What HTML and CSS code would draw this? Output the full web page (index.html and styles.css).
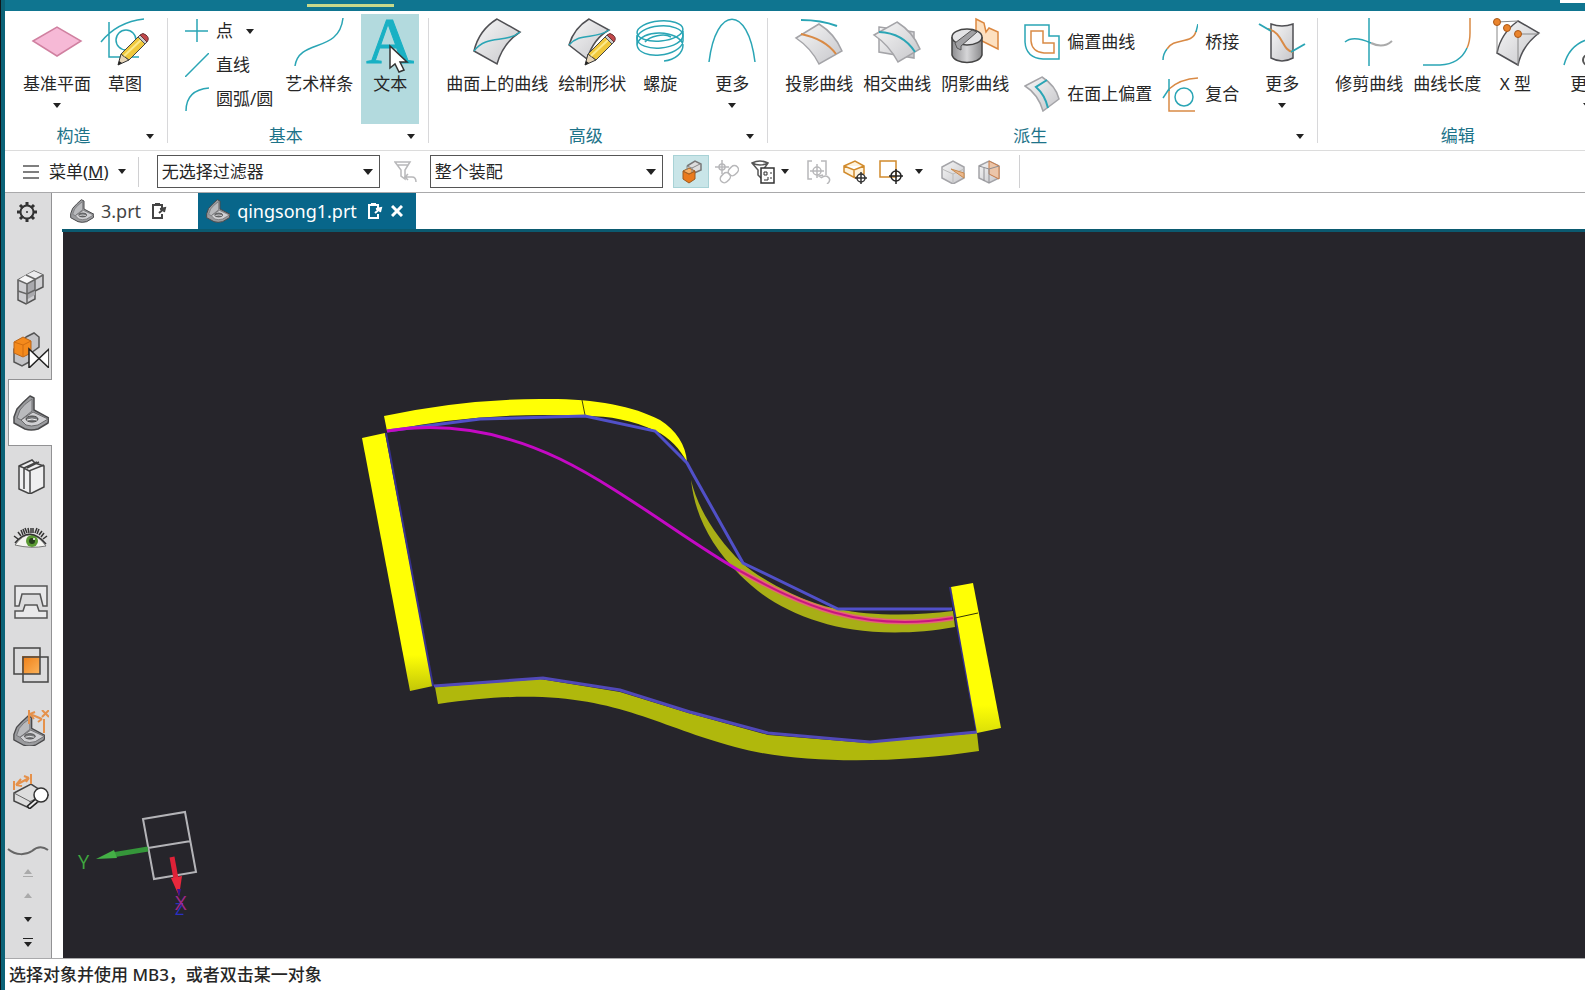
FILE: index.html
```html
<!DOCTYPE html>
<html lang="zh-CN">
<head>
  <meta charset="UTF-8" />
  <meta name="viewport" content="width=device-width, initial-scale=1.0" />
  <title>qingsong1.prt</title>
  <link rel="stylesheet" href="styles.css">
</head>
<body>
  <!-- Shared icons -->
  <svg class="defs" aria-hidden="true">
    <defs>
      <linearGradient id="metal" x1="0" y1="0" x2="1" y2="1">
        <stop offset="0" stop-color="#f7f7f7" />
        <stop offset="1" stop-color="#c6c6ca" />
      </linearGradient>
      <linearGradient id="steel" x1="0" y1="0" x2="1" y2="0">
        <stop offset="0" stop-color="#8d8d90" />
        <stop offset="0.5" stop-color="#d6d6d8" />
        <stop offset="1" stop-color="#8a8a8c" />
      </linearGradient>
      <linearGradient id="amber" x1="0" y1="0" x2="1" y2="1">
        <stop offset="0" stop-color="#ef7d14" />
        <stop offset="1" stop-color="#fbb45c" />
      </linearGradient>
    </defs>
    <symbol id="pencil" viewBox="0 0 48 48">
      <path d="M17 47l3-11 8 6z" fill="#e6d5b8" stroke="#333" />
      <path d="M17 47l1-4 3 2z" fill="#222" />
      <path d="M20 36L37 19l7 7-16 16z" fill="#f0c83c" stroke="#444" />
      <path d="M23 38L40 22" stroke="#fbe98c" stroke-width="2" />
      <path d="M37 19l2-2 7 7-2 2z" fill="#ccc" stroke="#555" />
      <path d="M39 17q3-3 6 0 4 3 1 7z" fill="#c2484b" stroke="#633" />
    </symbol>
    <symbol id="bracket" viewBox="0 0 36 36">
      <path d="M1 22l3-8Q9 8 17 1l4 2v12l15 8-1 5-10 6q-7 2-13 0L1 28z" fill="#9b9c9f" stroke="#4a4a4c" stroke-width="1.5" stroke-linejoin="round" />
      <path d="M4 23l3-8Q11 9 19 4v12L8 25z" fill="#b9babd" stroke="#717174" />
      <path d="M8 25l12-8 15 7-10 6q-7 2-12 0z" fill="#d0d0d3" stroke="#68686a" />
      <ellipse cx="19" cy="24" rx="6" ry="3" fill="#77787b" stroke="#444" />
      <path d="M14 25q5-2 10 0" fill="none" stroke="#eee" />
    </symbol>
    <symbol id="clip" viewBox="0 0 16 18">
      <path d="M11 6V3H2v13h9v-4" fill="none" stroke="currentColor" stroke-width="2" />
      <path d="M4 1h5v3H4z" fill="currentColor" />
      <path d="M8 11l6-5M9 7l5-1-1 4" fill="none" stroke="currentColor" stroke-width="2" />
    </symbol>
  </svg>

  <header class="titlebar">
    <span class="active-mark"></span>
    <span class="search-box"></span>
  </header>

  <nav class="ribbon" aria-label="曲线">
    <section class="group">
      <div class="group-body">
        <button class="big">
          <svg viewBox="0 0 48 48"><path d="M0 23L24 9l24 14-24 15z" fill="#f6b9d6" stroke="#d080a0" stroke-width="1.5" /></svg>
          <span>基准平面</span><i class="caret"></i>
        </button>
        <button class="big">
          <svg viewBox="0 0 48 48"><path d="M8 4v35h30M0 24Q16 4 43 1" class="teal" /><circle cx="25" cy="22" r="10" class="teal" /><use href="#pencil" width="48" height="48" /></svg>
          <span>草图</span>
        </button>
      </div>
      <footer><span>构造</span><button class="more" aria-label="构造选项"><i class="caret"></i></button></footer>
    </section>

    <section class="group basic">
      <div class="group-body">
        <div class="rows">
          <button class="small">
            <svg viewBox="0 0 24 24"><path d="M12 0v23M0 12h23" class="teal" /></svg>
            <span>点</span><i class="caret"></i>
          </button>
          <button class="small">
            <svg viewBox="0 0 24 24"><path d="M0 24L24 0" class="teal" /></svg>
            <span>直线</span>
          </button>
          <button class="small">
            <svg viewBox="0 0 24 24"><path d="M1 24Q1 3 24 1" class="teal" /></svg>
            <span>圆弧/圆</span>
          </button>
        </div>
        <button class="big">
          <svg viewBox="0 0 48 48"><path d="M0 48C4 20 44 36 48 0" class="teal" /></svg>
          <span>艺术样条</span>
        </button>
        <button class="big active">
          <svg viewBox="0 0 48 48"><text x="24" y="45" text-anchor="middle" class="letter">A</text></svg>
          <span>文本</span>
          <svg class="cursor" viewBox="0 0 20 30"><path d="M1 1v22l5-4 4 8 5-2-4-8h7z" fill="#fff" stroke="#333" stroke-width="1.5" /></svg>
        </button>
      </div>
      <footer><span>基本</span><button class="more" aria-label="基本选项"><i class="caret"></i></button></footer>
    </section>

    <section class="group">
      <div class="group-body">
        <button class="big">
          <svg viewBox="0 0 48 48"><path d="M1 33Q6 12 24 1l23 13Q30 25 24 46z" class="face" /><path d="M1 33C14 16 32 26 47 14" class="teal" /></svg>
          <span>曲面上的曲线</span>
        </button>
        <button class="big">
          <svg viewBox="0 0 48 48"><path d="M1 27Q6 10 21 1l20 11Q26 20 19 41z" class="face" /><path d="M1 27C12 14 27 22 41 12" class="teal" /><use href="#pencil" width="48" height="48" /></svg>
          <span>绘制形状</span>
        </button>
        <button class="big">
          <svg viewBox="0 0 48 48"><g class="teal"><ellipse cx="24" cy="13" rx="23" ry="10" transform="rotate(-5 24 13)" /><ellipse cx="24" cy="19" rx="23" ry="11" transform="rotate(-5 24 19)" /><path d="M1 17v10C3 43 45 39 47 23V13M1 27C4 10 44 12 47 27c0 8-8 15-19 16M9 24c5-6 19-9 26-5" /></g></svg>
          <span>螺旋</span>
        </button>
        <button class="big last">
          <svg viewBox="0 0 48 48"><path d="M1 44C8-13 40-13 47 44" class="teal" /></svg>
          <span>更多</span><i class="caret"></i>
        </button>
      </div>
      <footer><span>高级</span><button class="more" aria-label="高级选项"><i class="caret"></i></button></footer>
    </section>

    <section class="group">
      <div class="group-body">
        <button class="big">
          <svg viewBox="0 0 48 48"><path d="M1 20L24 6q16 10 23 27L24 46Q16 30 1 20z" class="face soft" /><path d="M6 16q24 5 35 20" class="orange bold" /><path d="M6 2q20 0 36 6" class="teal bold" /></svg>
          <span>投影曲线</span>
        </button>
        <button class="big">
          <svg viewBox="0 0 48 48"><path d="M6 9l35 5v26L6 34z" class="face soft" /><path d="M1 17L24 4q16 10 23 27L25 44Q16 27 1 17z" class="face soft" /><path d="M6 14q24 1 36 20" class="teal bold" /></svg>
          <span>相交曲线</span>
        </button>
        <button class="big">
          <svg viewBox="0 0 48 48"><path d="M25 1l8 4 2 9 3-4 9 4v17L25 20z" fill="#fde0c0" stroke="#dc8840" stroke-width="1.5" /><path d="M1 19v18c3 10 27 10 30 0V19" fill="url(#steel)" stroke="#444" stroke-width="1.5" /><ellipse cx="16" cy="19" rx="15" ry="8" fill="#e4e4e6" stroke="#444" stroke-width="1.5" /><path d="M4 25l17-13 5 2L10 28v4l-4-2z" fill="#a0a0a3" stroke="#555" /></svg>
          <span>阴影曲线</span>
        </button>
        <div class="rows medium-rows">
          <button class="medium">
            <svg viewBox="0 0 36 36"><path d="M1 1h24v11h10v23H19Q2 34 1 18z" class="teal" /><path d="M7 7h12v12h11v10H20Q8 28 7 17z" class="orange" /></svg>
            <span>偏置曲线</span>
          </button>
          <button class="medium">
            <svg viewBox="0 0 36 36"><path d="M1 10l17-9q14 9 17 22L19 35Q14 18 1 10z" class="face soft" /><path d="M23 4l-11 7q9 8 12 21" class="teal bold" /></svg>
            <span>在面上偏置</span>
          </button>
        </div>
        <div class="rows medium-rows">
          <button class="medium">
            <svg viewBox="0 0 36 36"><path d="M5 25C12 13 31 21 34 7" class="orange" /><path d="M1 36q0-6 4-11M34 8l2-8" class="teal" /></svg>
            <span>桥接</span>
          </button>
          <button class="medium">
            <svg viewBox="0 0 36 36"><path d="M7 13v22h26M7 13Q18 3 36 2" class="orange" /><path d="M7 3v12M1 22l6-9" class="teal" /><circle cx="22" cy="21" r="9" class="teal" /></svg>
            <span>复合</span>
          </button>
        </div>
        <button class="big last">
          <svg viewBox="0 0 48 48"><path d="M13 6q11 4 22 0v34q-11 6-22 0z" class="face" /><path d="M10 11c15 3 14 22 25 23" class="orange bold" /><path d="M1 6l12 7M33 34l14-8" class="teal bold" /></svg>
          <span>更多</span><i class="caret"></i>
        </button>
      </div>
      <footer><span>派生</span><button class="more" aria-label="派生选项"><i class="caret"></i></button></footer>
    </section>

    <section class="group">
      <div class="group-body">
        <button class="big">
          <svg viewBox="0 0 48 48"><path d="M26 25q12 6 21-2" fill="none" stroke="#aaa" stroke-width="2" /><path d="M24 0v48M0 24q8-7 26 1" class="teal" /></svg>
          <span>修剪曲线</span>
        </button>
        <button class="big">
          <svg viewBox="0 0 48 48"><path d="M0 47h17q20-1 27-17" class="teal" /><path d="M44 30q3-6 3-15V0" class="orange" /></svg>
          <span>曲线长度</span>
        </button>
        <button class="big">
          <svg viewBox="0 0 48 48"><path d="M6 35Q10 15 27 3l21 12Q31 28 27 47z" class="face" /><path d="M6 4v31M6 4l21-1M27 47V16h21" fill="none" stroke="#888" /><g fill="#ea842c" stroke="#a95718"><circle cx="6" cy="4" r="3.5" /><circle cx="16" cy="10" r="3.5" /><circle cx="27" cy="16" r="3.5" /></g></svg>
          <span>X 型</span>
        </button>
        <button class="big last">
          <svg viewBox="0 0 48 48"><path d="M1 47Q8 20 40 19" class="teal" /><circle cx="25" cy="42" r="5" fill="none" stroke="#555" stroke-width="2" /></svg>
          <span>更多</span><i class="caret"></i>
        </button>
      </div>
      <footer><span>编辑</span><button class="more" aria-label="编辑选项"><i class="caret"></i></button></footer>
    </section>
  </nav>

  <div class="toolbar">
    <button class="menu">
      <svg viewBox="0 0 16 16"><path d="M0 2h16M0 8h16M0 14h16" stroke="#555" stroke-width="1.5" /></svg>
      <span>菜单(<u>M</u>)</span><i class="caret"></i>
    </button>
    <div class="pick">
      <select aria-label="选择过滤器"><option>无选择过滤器</option></select>
    </div>
    <button class="tool filter" aria-label="重置过滤器" disabled>
      <svg viewBox="0 0 24 24"><path d="M1 2h15l-5 8v9l-4-3v-6zM3 5h11" class="off" /><path d="M14 14l-3 3 3 3M11 17h7q4 0 4 5" class="off" /></svg>
    </button>
    <div class="pick wide">
      <select aria-label="选择范围"><option>整个装配</option></select>
    </div>
    <div class="tools">
      <button class="tool on" aria-label="实体">
        <svg viewBox="0 0 24 24"><path d="M8 6l8-5 6 3v6l-9 4" fill="#ddd" stroke="#777" stroke-width="1.5" /><path d="M4 11l6 3 6-3v8l-6 4-6-4z" fill="#ea7a1c" stroke="#9d5b1e" /><path d="M4 11l6-3 6 3-6 3z" fill="#f9b065" stroke="#9d5b1e" /><path d="M8 10V6l5 2 8-4M13 8v4" fill="none" stroke="#888" /></svg>
      </button>
      <button class="tool" aria-label="链接" disabled>
        <svg viewBox="0 0 24 24"><g class="off"><circle cx="7" cy="7" r="3" /><path d="M7 0v14M0 7h14" /><rect x="13" y="7" width="11" height="8" rx="4" transform="rotate(-45 18 11)" /><rect x="5" y="14" width="11" height="8" rx="4" transform="rotate(-45 10 18)" /></g></svg>
      </button>
      <button class="tool drop" aria-label="过滤列表">
        <svg viewBox="0 0 24 24"><path d="M1 3q8-4 16 0l-5 7v10l-5-5v-5zM1 3q8 4 16 0" fill="#fff" stroke="#555" stroke-width="1.5" /><path d="M10 8h13v15H10z" fill="#fff" stroke="#333" stroke-width="1.5" /><path d="M13 12h3v3h-3zM13 20h4v-3M19 13h2M19 18h2" fill="none" stroke="#333" /></svg>
        <i class="caret"></i>
      </button>
      <button class="tool" aria-label="捕捉" disabled>
        <svg viewBox="0 0 24 24"><g class="off"><path d="M5 1H1v18h4M14 1h5v14M10 4v14M3 11h14M15 18l-3-2 4-1M14 18q5-4 8 0 2 3-2 6" /><circle cx="10" cy="11" r="4" /></g></svg>
      </button>
      <button class="tool" aria-label="工作部件">
        <svg viewBox="0 0 24 24"><path d="M1 6l11-5 9 5v8l-9 4-11-6zM1 6l10 4 10-4M11 10v8" fill="#fff3dc" stroke="#d18b2c" stroke-width="1.5" /><circle cx="18" cy="18" r="4" fill="#fff" stroke="#333" stroke-width="1.5" /><path d="M18 12v12M12 18h12" stroke="#333" stroke-width="1.5" /></svg>
      </button>
      <button class="tool drop wide-drop" aria-label="矩形选择">
        <svg viewBox="0 0 24 24"><path d="M1 1h16v16H1z" fill="none" stroke="#d18b2c" stroke-width="1.5" /><circle cx="17" cy="16" r="5" fill="none" stroke="#222" stroke-width="1.5" /><path d="M17 9v15M10 16h14" stroke="#222" stroke-width="1.5" /></svg>
        <i class="caret"></i>
      </button>
      <button class="tool" aria-label="截面">
        <svg viewBox="0 0 24 24"><path d="M1 7l11-6 11 6v11l-11 6-11-6z" class="face soft" /><path d="M1 9l11 5 11-5M12 14v9" fill="none" stroke="#bbb" /><path d="M10 9l13 4v5z" fill="#eab78c" stroke="#c88b50" /></svg>
      </button>
      <button class="tool" aria-label="剪切">
        <svg viewBox="0 0 24 24"><path d="M2 6l10-5 10 5v12l-10 5-10-5z" class="face soft" /><path d="M12 1l10 5v13l-10-5z" fill="#ebc5a9" stroke="#c77a47" /><path d="M2 6l10 3 10-3M12 9v14M7 8v13" fill="none" stroke="#8e8e92" /></svg>
      </button>
    </div>
  </div>

  <div class="workspace">
    <aside class="sidebar">
      <button class="gear" aria-label="设置">
        <svg viewBox="0 0 20 20"><circle cx="10" cy="10" r="6.5" fill="none" stroke="#333" stroke-width="2" /><path d="M10 0v4M10 16v4M0 10h4M16 10h4M3 3l3 3M14 14l3 3M17 3l-3 3M6 14l-3 3" stroke="#333" stroke-width="3" /><circle cx="10" cy="10" r="1" fill="#333" /></svg>
      </button>
      <button class="side" aria-label="装配导航器">
        <svg viewBox="0 0 36 36"><path d="M5 11l16-9 9 4v12l-8 4v8l-9 5-8-4z" fill="#cfcfd2" stroke="#555" stroke-width="1.5" /><path d="M5 11l8-5 9 4-8 5z" fill="#f6f6f7" /><path d="M13 6l8-4 9 4-8 4z" fill="#ececee" /><path d="M14 15l8-5v16l-9 5z" fill="#a9a9ad" /><path d="M5 11l9 4 16-9M14 15v20M5 22l9 3 8-4V10l-9-4" fill="none" stroke="#666" stroke-width="1.5" /></svg>
      </button>
      <button class="side" aria-label="约束导航器">
        <svg viewBox="0 0 36 36"><path d="M13 5l8-4 5 4v10l-8 6v8l-9 5-8-4V17z" fill="#c4c4c7" stroke="#555" stroke-width="1.5" /><path d="M1 10l9-5 8 4v12l-8 4-9-4z" fill="#f48a1c" stroke="#b8651b" /><path d="M1 10l9 3 8-4M10 13v12" fill="none" stroke="#d16d10" /><path d="M16 17v19l20-19v19z" fill="#fff" stroke="#222" stroke-width="1.5" /></svg>
      </button>
      <button class="side current" aria-label="部件导航器">
        <svg><use href="#bracket" /></svg>
      </button>
      <button class="side" aria-label="重用库">
        <svg viewBox="0 0 36 36"><path d="M6 8L19 2l3 3 9 3v21l-14 7-11-5z" fill="#efeff0" stroke="#444" stroke-width="1.5" /><path d="M6 8l5 2 13-6M11 10v21M11 10l5 3 15-6M17 13v22M14 10l12-6" fill="none" stroke="#444" stroke-width="1.5" /></svg>
      </button>
      <button class="side" aria-label="视图">
        <svg viewBox="0 0 36 36"><path d="M2 24Q17 3 33 25 18 28 2 24z" fill="#f4f4f0" stroke="#777" /><circle cx="19" cy="20" r="6" fill="#5b9a34" /><circle cx="19" cy="20" r="3" fill="#263d1c" /><circle cx="21" cy="18" r="1" fill="#fff" /><path d="M2 22Q17 4 33 23M5 18l-4-3M8 15L5 11M12 13l-2-5M16 12l-1-5M20 12V7M24 13l2-5M28 16l3-4M30 18l4-3M10 14L8 9M14 12l-2-5M18 12V7M22 12l2-5M26 14l3-4" fill="none" stroke="#333" stroke-width="1.5" /></svg>
      </button>
      <button class="side" aria-label="模具">
        <svg viewBox="0 0 36 36"><path d="M2 2h32v20h-4L27 10H9L6 22H2zM2 34h32v-7h-8l-2-6H12l-2 6H2z" fill="#e9e9ea" stroke="#555" stroke-width="1.5" /></svg>
      </button>
      <button class="side" aria-label="布尔">
        <svg viewBox="0 0 36 36"><path d="M9 9h18v18H9z" fill="url(#amber)" /><path d="M1 1h26v26H1zM10 10h25v25H10z" fill="none" stroke="#444" stroke-width="1.5" /></svg>
      </button>
      <button class="side" aria-label="尺寸">
        <svg viewBox="0 0 36 36"><use href="#bracket" width="32" height="32" y="5" /><path d="M16 0v14M31 9v14M17 4l12 5M17 4l5-2M17 4l4 5M29 9l-5-2M29 9l-4 3M29 0l7 7M36 0l-7 7" fill="none" stroke="#e5914b" stroke-width="2" /></svg>
      </button>
      <button class="side" aria-label="测量">
        <svg viewBox="0 0 36 36"><path d="M1 20l17-9 17 11-19 13L1 28z" fill="#ddd" stroke="#444" stroke-width="1.5" /><path d="M1 20l17 9v6M16 29l17-8" fill="none" stroke="#666" /><path d="M1 8v9M18 1v10M3 12l13-7M3 12l5-6M3 12l6 1M16 5l-5-2M16 5l-3 4" fill="none" stroke="#e5914b" stroke-width="2" /><path d="M23 28l-8 7" stroke="#222" stroke-width="5" /><path d="M23 28l-7 6" stroke="#eee" stroke-width="2" /><circle cx="28" cy="22" r="7" fill="#fff" stroke="#333" stroke-width="1.5" /></svg>
      </button>
      <button class="side curve" aria-label="曲线">
        <svg viewBox="0 0 42 12"><path d="M1 4c8 7 18 6 24 2q8-7 16-1" fill="none" stroke="#666" stroke-width="2" /></svg>
      </button>
      <button class="scroll" aria-label="到顶部" disabled><svg viewBox="0 0 12 10"><path d="M2 6l4-5 4 5zM1 8h10v1H1z" fill="#aaa" /></svg></button>
      <button class="scroll" aria-label="向上" disabled><svg viewBox="0 0 12 10"><path d="M2 7l4-5 4 5z" fill="#aaa" /></svg></button>
      <button class="scroll" aria-label="向下"><svg viewBox="0 0 12 10"><path d="M2 3h8L6 8z" fill="#222" /></svg></button>
      <button class="scroll" aria-label="到底部"><svg viewBox="0 0 12 10"><path d="M1 1h10v1H1zM2 5h8l-4 5z" fill="#222" /></svg></button>
    </aside>

    <main class="document">
      <div class="tabs" role="tablist">
        <button class="tab" role="tab">
          <svg class="part"><use href="#bracket" /></svg>
          <span>3.prt</span>
          <svg class="clip"><use href="#clip" /></svg>
        </button>
        <button class="tab selected" role="tab" aria-selected="true">
          <svg class="part"><use href="#bracket" /></svg>
          <span>qingsong1.prt</span>
          <svg class="clip"><use href="#clip" /></svg>
          <svg class="close" viewBox="0 0 12 12"><path d="M1 1l10 10M11 1L1 11" stroke="#fff" stroke-width="3" /></svg>
        </button>
      </div>

      <svg class="viewport" viewBox="63 232 1522 725" preserveAspectRatio="xMinYMin meet">
        <defs>
          <linearGradient id="shadeLeft" gradientUnits="userSpaceOnUse" x1="0" y1="655" x2="0" y2="690">
            <stop offset="0" stop-color="#ffff05" />
            <stop offset="1" stop-color="#c4c808" />
          </linearGradient>
          <linearGradient id="shadeRight" gradientUnits="userSpaceOnUse" x1="0" y1="705" x2="0" y2="732">
            <stop offset="0" stop-color="#ffff05" />
            <stop offset="1" stop-color="#dce008" />
          </linearGradient>
        </defs>

        <!-- Sheet walls -->
        <path d="M384 416Q463 399 540 399C590 398 632 405 660 420C676 430 686 445 687 462C680 449 670 438 656 431C632 420 610 416 585 416Q480 411 387 431z" fill="#ffff05" />
        <path d="M582 400l3 15" stroke="#44440a" />
        <path d="M362 438l23-5 48 253-23 5z" fill="url(#shadeLeft)" />
        <path d="M435 687L540 679 620 692 688 713 768 735 867 743 977 733 979 751C900 763 800 765 735 747C640 722 600 680 438 704z" fill="#b0b80c" />
        <path d="M691 480C698 510 718 540 742 563C765 583 810 605 838 609C870 616 915 616 953 611L955 627C900 637 850 632 820 622C785 611 762 597 740 575C710 545 695 515 691 480z" fill="#a8ae16" />

        <!-- Edges -->
        <path d="M386 433L433 686M950 587L977 732" fill="none" stroke="#37318f" stroke-width="2" />
        <path d="M434 686L543 678 620 690 690 712 768 733 870 742 977 732" fill="none" stroke="#5149b8" stroke-width="3" />
        <path d="M387 431L480 419 585 416 655 431 687 463 693 474 743 563 838 609 952 609" fill="none" stroke="#5150c8" stroke-width="3" />

        <!-- Guide curve -->
        <path d="M387 431C450 421 510 435 560 459C620 488 690 543 740 571C800 604 860 633 953 618" fill="none" stroke="#c409c4" stroke-width="3" />
        <path d="M740 571C800 604 860 633 953 618" fill="none" stroke="#e46476" stroke-width="5" />
        <path d="M740 571C800 604 860 633 953 618" fill="none" stroke="#c81480" stroke-width="2" />
        <path d="M951 587l22-4 28 145-24 5z" fill="url(#shadeRight)" />
        <path d="M955 618l23-5" stroke="#333308" stroke-width="1" />

        <!-- Orientation triad -->
        <path d="M143 819l42-7 11 60-42 7zM148 848l43-7" fill="none" stroke="#b4b4b8" stroke-width="2" />
        <path d="M148 849l-36 6" stroke="#35963a" stroke-width="5" />
        <path d="M96 859l18-9 3 8z" fill="#44b046" />
        <path d="M172 857l4 22" stroke="#de2238" stroke-width="5" />
        <path d="M171 878l11-2-3 20z" fill="#e8283c" />
        <path d="M177 889l2 8 2-8z" fill="#3d1690" />
        <text x="78" y="869" class="axis" fill="#3fa83f">Y</text>
        <text x="175" y="915" class="axis z" fill="#2930c4">Z</text>
        <text x="175" y="910" class="axis" fill="#a0288c">X</text>
      </svg>
    </main>
  </div>

  <footer class="status">选择对象并使用 MB3，或者双击某一对象</footer>
</body>
</html>
```
FILE: styles.css
```css
* {
  margin: 0;
  padding: 0;
  box-sizing: border-box;
}

html {
  border-left: 1px solid #10161a;
}

body {
  font-family: 'Noto Sans', 'Noto Sans CJK SC', sans-serif;
  font-size: 17px;
  line-height: 24px;
  color: #262626;
  background: #fff;
  height: 100vh;
  display: flex;
  flex-direction: column;
  overflow: hidden;
  border-left: 4px solid #0b6277;
}

button {
  font: inherit;
  color: inherit;
  background: none;
  border: none;
  cursor: pointer;
  white-space: nowrap;
}

svg {
  display: block;
  flex: none;
}

.defs {
  position: absolute;
  width: 0;
  height: 0;
}

.teal {
  fill: none;
  stroke: #2aa5b5;
  stroke-width: 1.5;
}

.orange {
  fill: none;
  stroke: #d98a45;
  stroke-width: 1.5;
}

.bold {
  stroke-width: 2;
}

.face {
  fill: url(#metal);
  stroke: #505054;
  stroke-width: 1.5;
}

.soft {
  stroke: #a4a4a8;
}

.off {
  fill: none;
  stroke: #b8b8ba;
  stroke-width: 1.5;
}

.caret {
  display: block;
  border: 4px solid transparent;
  border-top: 5px solid #222;
  border-bottom: none;
}

/* Title bar */
.titlebar {
  flex: 0 0 11px;
  margin-left: -4px;
  background: #0f7590;
  display: flex;
  justify-content: space-between;
}

.active-mark {
  width: 87px;
  height: 3px;
  margin: 4px 0 0 306px;
  background: #c8d98a;
}

.search-box {
  width: 25px;
  height: 3px;
  background: #fff;
}

/* Ribbon */
.ribbon {
  flex: 0 0 140px;
  display: flex;
  overflow: hidden;
  border-bottom: 1px solid #dcdcdc;
}

.group {
  flex: none;
  display: flex;
  flex-direction: column;
  position: relative;
}

.group::after {
  content: '';
  position: absolute;
  top: 7px;
  right: 0;
  bottom: 7px;
  width: 1px;
  background: #d8d8da;
}

.group-body {
  height: 113px;
  padding: 3px 7px 0 12px;
  display: flex;
}

.group:first-child .group-body {
  padding: 3px 14px 0 13px;
}

.basic .group-body {
  padding: 3px 10px 0 15px;
}

.group footer {
  display: grid;
  grid-template-columns: 1fr 26px;
  text-align: center;
  color: #1d7389;
}

.more {
  display: flex;
  align-items: center;
  padding-left: 4px;
}

.big {
  position: relative;
  height: 110px;
  padding: 4px 5px;
  display: flex;
  flex-direction: column;
  align-items: center;
}

.big svg {
  width: 48px;
  height: 48px;
  overflow: visible;
}

.big span {
  margin-top: 6px;
}

.big .caret {
  margin-top: 7px;
}

.big.last {
  margin-left: 14px;
}

.big.active {
  margin-left: 3px;
  background: #b3dade;
}

.letter {
  font-family: 'Liberation Serif', serif;
  font-size: 66px;
  fill: #19b1c4;
  stroke: #19b1c4;
}

.big .cursor {
  position: absolute;
  left: 28px;
  top: 31px;
  width: 20px;
  height: 30px;
}

.rows {
  display: flex;
  flex-direction: column;
}

.small {
  height: 34px;
  padding: 0 7px 0 2px;
  display: flex;
  align-items: center;
  gap: 7px;
}

.small svg {
  width: 24px;
  height: 24px;
}

.small .caret {
  margin-left: 6px;
}

.medium-rows {
  padding: 2px 0 0 10px;
}

.medium {
  height: 52px;
  display: flex;
  align-items: center;
  gap: 7px;
}

.medium svg {
  width: 36px;
  height: 36px;
}

/* Selection toolbar */
.toolbar {
  flex: 0 0 42px;
  display: flex;
  align-items: center;
  border-bottom: 1px solid #a9a9ab;
}

.menu {
  height: 30px;
  padding: 0 12px 0 18px;
  margin-right: 18px;
  display: flex;
  align-items: center;
  border-right: 1px solid #d0d0d2;
}

.menu svg {
  width: 16px;
  height: 16px;
  margin-right: 10px;
}

.menu .caret {
  margin-left: 9px;
}

.pick {
  position: relative;
  width: 223px;
}

.pick.wide {
  width: 233px;
}

.pick select {
  width: 100%;
  height: 33px;
  padding: 0 4px;
  font: inherit;
  color: inherit;
  background: #fff;
  border: 1px solid #555;
  border-radius: 0;
  appearance: none;
}

.pick::after {
  content: '';
  position: absolute;
  right: 7px;
  top: 14px;
  border: 5px solid transparent;
  border-top: 6px solid #222;
  border-bottom: none;
  pointer-events: none;
}

.tool {
  height: 33px;
  padding: 0 6px;
  display: flex;
  align-items: center;
}

.tool svg {
  width: 24px;
  height: 24px;
}

.tool.filter {
  padding: 0 12px 0 14px;
}

.tools {
  display: flex;
  margin-left: 10px;
  padding-right: 12px;
  border-right: 1px solid #d0d0d2;
}

.tool.on {
  padding: 0 5px;
  background: #c9e5e8;
  border: 1px solid #a8d2d6;
}

.tool.drop {
  padding-right: 12px;
}

.tool .caret {
  margin-left: 6px;
}

.tool.wide-drop .caret {
  margin-left: 12px;
}

/* Workspace */
.workspace {
  flex: 1;
  min-height: 0;
  display: flex;
}

.sidebar {
  flex: 0 0 47px;
  padding-bottom: 5px;
  display: flex;
  flex-direction: column;
  background: #dcdcdd;
  border-right: 1px solid #929294;
}

.gear {
  flex: 0 0 38px;
  margin-bottom: 24px;
  padding-left: 12px;
}

.gear svg {
  width: 20px;
  height: 20px;
}

.side {
  flex: 0 0 63px;
  display: flex;
  align-items: center;
  padding-left: 8px;
}

.side svg {
  width: 36px;
  height: 36px;
}

.side.current {
  flex-basis: 67px;
  margin: -2px -1px -2px 3px;
  padding-left: 4px;
  background: #fff;
  border: 1px solid #929294;
  border-right: none;
}

.side.curve {
  flex: 1;
  min-height: 0;
  padding: 18px 0 0 2px;
}

.side.curve svg {
  width: 42px;
  height: 12px;
}

.scroll {
  flex: 0 0 23px;
  padding-left: 17px;
}

.scroll svg {
  width: 12px;
  height: 10px;
}

.document {
  flex: 1;
  min-width: 0;
  padding-left: 11px;
  display: flex;
  flex-direction: column;
}

.tabs {
  flex: 0 0 39px;
  margin-left: -1px;
  display: flex;
  border-bottom: 3px solid #0b5a70;
}

.tab {
  display: flex;
  align-items: center;
  padding: 0 31px 0 8px;
  font-family: 'Noto Sans', sans-serif;
  font-size: 18px;
  color: #444;
}

.tab.selected {
  padding: 0 13px 0 8px;
  color: #fff;
  background: #08668a;
}

.tab .part {
  width: 24px;
  height: 24px;
  margin-right: 7px;
}

.tab .clip {
  width: 16px;
  height: 18px;
  margin-left: 10px;
}

.tab .close {
  width: 12px;
  height: 12px;
  margin-left: 8px;
}

.viewport {
  width: 100%;
  flex: 1;
  min-height: 0;
  background: #26252b;
}

.axis {
  font-family: 'Open Sans', sans-serif;
  font-size: 20px;
}

.axis.z {
  font-size: 16px;
}

.status {
  flex: 0 0 32px;
  padding: 4px 4px 0;
  font-weight: 500;
  border-top: 1px solid #a9a9ab;
}
```
